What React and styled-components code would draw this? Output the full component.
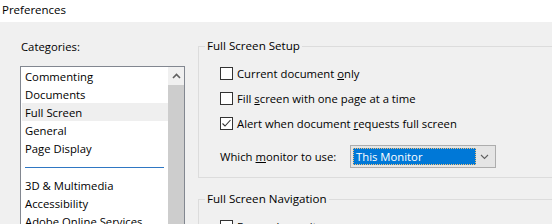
import React from "react";
import styled, { createGlobalStyle } from "styled-components";

const Global = createGlobalStyle`
  html, body { margin: 0; padding: 0; background: #f0f0f0; }
  body { font-family: "Open Sans", "Segoe UI", sans-serif; font-size: 11.3px; color: #000; }
  #root { width: 552px; height: 224px; overflow: hidden; }
`;

const Window = styled.div`
  width: 552px;
  height: 224px;
  display: flex;
  flex-direction: column;
  background: #f0f0f0;
  overflow: hidden;
`;

const TitleBar = styled.div`
  height: 22px;
  flex: none;
  background: #fff;
  display: flex;
  align-items: center;
  padding: 0 0 4px 2px;
  box-sizing: border-box;
  font-size: 11.5px;
`;

const Body = styled.div`
  flex: 1;
  display: flex;
  min-height: 0;
`;

const LeftCol = styled.div`
  width: 198px;
  flex: none;
  padding-left: 20px;
  box-sizing: border-box;
  display: flex;
  flex-direction: column;
`;

const Label = styled.div`
  height: 18px;
  line-height: 18px;
  margin-top: 16px;
  margin-left: 1px;
  margin-bottom: 10px;
  flex: none;
`;

const ListBox = styled.div`
  width: 165px;
  flex: 1;
  border: 1px solid #828790;
  border-bottom: none;
  box-sizing: border-box;
  background: #fff;
  display: flex;
  min-height: 0;
  overflow: hidden;
`;

const Items = styled.div`
  flex: 1;
  display: flex;
  flex-direction: column;
`;

const Item = styled.div`
  flex: none;
  height: 18px;
  line-height: 19px;
  margin-left: 1px;
  padding-left: 3px;
  white-space: nowrap;
  background: ${(p) => (p.$selected ? "#efefef" : "transparent")};
`;

const Separator = styled.div`
  flex: none;
  height: 19px;
  display: flex;
  align-items: center;
  padding: 0 4px;
  &::after {
    content: "";
    flex: 1;
    height: 1px;
    margin-top: 1px;
    background: #2f77c3;
  }
`;

const ScrollBar = styled.div`
  width: 16px;
  flex: none;
  background: #f0f0f0;
  display: flex;
  flex-direction: column;
`;

const ScrollArrow = styled.div`
  height: 18px;
  flex: none;
  display: flex;
  align-items: center;
  justify-content: center;
`;

const Thumb = styled.div`
  flex: 1;
  background: #cdcdcd;
`;

const RightCol = styled.div`
  flex: 1;
  display: flex;
  flex-direction: column;
  padding-top: 17px;
`;

const Group = styled.fieldset`
  margin: 0 0 14px 0;
  padding: 0 0 9px 0;
  border: 1px solid #dcdcdc;
  border-right: none;
  min-width: 0;
`;

const Legend = styled.legend`
  margin-left: 6px;
  padding: 0 2px;
  line-height: 14px;
  font-size: 11.6px;
`;

const GroupContent = styled.div`
  padding-left: 21px;
  padding-top: 8px;
`;

const CheckRow = styled.label`
  height: 25px;
  display: flex;
  align-items: center;
  gap: 4px;
  white-space: nowrap;
`;

const Box = styled.span`
  width: 13px;
  height: 13px;
  box-sizing: border-box;
  border: 1px solid #333;
  background: #fff;
  flex: none;
  display: flex;
  align-items: center;
  justify-content: center;
`;

const SelectRow = styled.div`
  display: flex;
  align-items: center;
  margin-top: 9px;
  white-space: nowrap;
`;

const SelectLabel = styled.span`
  width: 130px;
  flex: none;
`;

const Select = styled.div`
  width: 146px;
  height: 23px;
  box-sizing: border-box;
  border: 1px solid #adadad;
  background: #e5e5e5;
  display: flex;
  align-items: center;
  padding: 2px;
`;

const SelValue = styled.div`
  width: 123px;
  height: 17px;
  box-sizing: border-box;
  background: #0078d7;
  color: #fff;
  border: 1px dotted #f3c27a;
  line-height: 15px;
  padding-left: 2px;
`;

const Chevron = styled.div`
  flex: 1;
  display: flex;
  justify-content: center;
  align-items: center;
`;

function Check({ checked, children }) {
  return (
    <CheckRow>
      <Box>
        {checked && (
          <svg width="11" height="11" viewBox="0 0 11 11">
            <path d="M1.5 5.5 L4 8 L9.5 2" fill="none" stroke="#333" strokeWidth="1.1" />
          </svg>
        )}
      </Box>
      <span>{children}</span>
    </CheckRow>
  );
}

export default function App() {
  return (
    <Window>
      <Global />
      <TitleBar>Preferences</TitleBar>
      <Body>
        <LeftCol>
          <Label>Categories:</Label>
          <ListBox>
            <Items>
              <Item>Commenting</Item>
              <Item>Documents</Item>
              <Item $selected>Full Screen</Item>
              <Item>General</Item>
              <Item>Page Display</Item>
              <Separator />
              <Item>3D &amp; Multimedia</Item>
              <Item>Accessibility</Item>
              <Item>Adobe Online Services</Item>
            </Items>
            <ScrollBar>
              <ScrollArrow>
                <svg width="9" height="6" viewBox="0 0 9 6">
                  <path d="M1 5 L4.5 1.5 L8 5" fill="none" stroke="#606060" strokeWidth="1.6" />
                </svg>
              </ScrollArrow>
              <Thumb />
            </ScrollBar>
          </ListBox>
        </LeftCol>
        <RightCol>
          <Group>
            <Legend>Full Screen Setup</Legend>
            <GroupContent>
              <Check>Current document <u>o</u>nly</Check>
              <Check>Fill <u>s</u>creen with one page at a time</Check>
              <Check checked>Alert when document <u>r</u>equests full screen</Check>
              <SelectRow>
                <SelectLabel>Which <u>m</u>onitor to use:</SelectLabel>
                <Select>
                  <SelValue>This Monitor</SelValue>
                  <Chevron>
                    <svg width="9" height="6" viewBox="0 0 9 6">
                      <path d="M1 1 L4.5 4.5 L8 1" fill="none" stroke="#606060" strokeWidth="1.1" />
                    </svg>
                  </Chevron>
                </Select>
              </SelectRow>
            </GroupContent>
          </Group>
          <Group>
            <Legend>Full Screen Navigation</Legend>
            <GroupContent>
              <Check>Escape key exits</Check>
            </GroupContent>
          </Group>
        </RightCol>
      </Body>
    </Window>
  );
}
